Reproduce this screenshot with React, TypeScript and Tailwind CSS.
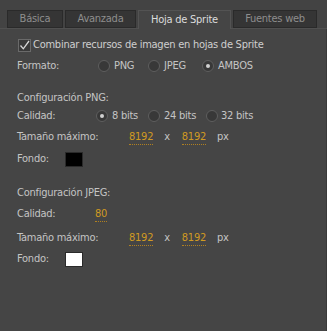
import React from "react";

const font = { fontFamily: '"DejaVu Sans Condensed", "Liberation Sans", Arial, sans-serif' };

function Radio({ checked }: { checked?: boolean }) {
  return (
    <span className="w-[12px] h-[12px] rounded-full border border-[#5e5e5e] bg-[#383838] flex items-center justify-center shrink-0">
      {checked && <span className="w-[4px] h-[4px] rounded-full bg-[#d0d0d0]" />}
    </span>
  );
}

function Val({ v }: { v: string }) {
  return (
    <span className="text-[#d09a22] border-b border-dotted border-[#b08020] leading-[14px]">{v}</span>
  );
}

function SizeRow() {
  return (
    <div className="flex items-center h-[20px]">
      <span className="w-[112px]">Tamaño máximo:</span>
      <Val v="8192" />
      <span className="ml-[11px] mr-[12px]">x</span>
      <Val v="8192" />
      <span className="ml-[11px]">px</span>
    </div>
  );
}

export default function App() {
  return (
    <div className="w-[327px] h-[331px] bg-[#434343] text-[#c4c4c4] text-[11px] tracking-[-0.25px] flex flex-col" style={font}>
      <div className="pt-[10px] flex items-end pl-[7px] h-[29px] border-b border-[#505050]">
        <div className="w-[56px] h-[18px] mr-[2px] bg-[#353535] border border-[#2a2a2a] text-[#8e8e8e] flex items-center justify-center">Básica</div>
        <div className="w-[71px] h-[18px] mr-[2px] bg-[#353535] border border-[#2a2a2a] text-[#8e8e8e] flex items-center justify-center">Avanzada</div>
        <div className="w-[93px] h-[19px] mr-[2px] bg-[#454545] border border-b-0 border-[#535353] text-[#dcdcdc] flex items-center justify-center -mb-px">Hoja de Sprite</div>
        <div className="w-[84px] h-[18px] bg-[#353535] border border-[#2a2a2a] text-[#8e8e8e] flex items-center justify-center">Fuentes web</div>
      </div>
      <div className="flex-1 bg-[#454545] pl-[17px] pt-[9px] border-r border-[#3a3a3a]">
        <div className="flex items-center h-[14px]">
          <span className="ml-[1px] w-[13px] h-[13px] border border-[#6a6a6a] bg-[#3a3a3a] flex items-center justify-center mr-[2px]">
            <svg width="11" height="11" viewBox="0 0 11 11"><path d="M1.5 5.5 L4.3 8.8 L10 1" stroke="#d8d8d8" strokeWidth="1.3" fill="none" /></svg>
          </span>
          <span className="text-[#cfcfcf]">Combinar recursos de imagen en hojas de Sprite</span>
        </div>
        <div className="flex items-center h-[20px] mt-[4px]">
          <span className="w-[81px]">Formato:</span>
          <Radio /><span className="ml-[4px] w-[34px]">PNG</span>
          <Radio /><span className="ml-[4px] w-[38px]">JPEG</span>
          <Radio checked /><span className="ml-[4px]">AMBOS</span>
        </div>
        <div className="mt-[12px] h-[20px] flex items-center">Configuración PNG:</div>
        <div className="flex items-center h-[18px] -mt-[1px]">
          <span className="w-[79px]">Calidad:</span>
          <Radio checked /><span className="ml-[4px] w-[36px]">8 bits</span>
          <Radio /><span className="ml-[4px] w-[42px]">24 bits</span>
          <Radio /><span className="ml-[3px]">32 bits</span>
        </div>
        <div className="mt-[2px]"><SizeRow /></div>
        <div className="flex items-center h-[20px] mt-[2px]">
          <span className="w-[48px]">Fondo:</span>
          <span className="w-[18px] h-[15px] bg-black border border-[#2a2a2a]" />
        </div>
        <div className="mt-[14px] h-[20px] flex items-center">Configuración JPEG:</div>
        <div className="flex items-center h-[20px] mt-[1px]">
          <span className="w-[78px]">Calidad:</span>
          <Val v="80" />
        </div>
        <div className="mt-[4px]"><SizeRow /></div>
        <div className="flex items-center h-[20px] mt-[1px]">
          <span className="w-[48px]">Fondo:</span>
          <span className="w-[18px] h-[15px] bg-white border border-[#2a2a2a]" />
        </div>
      </div>
    </div>
  );
}
